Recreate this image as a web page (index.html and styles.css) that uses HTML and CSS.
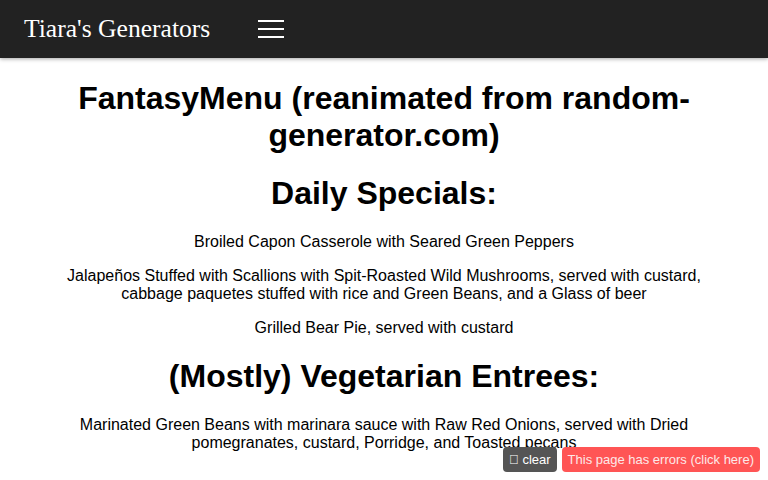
FILE: index.html
```html
<!DOCTYPE html>
<html lang="en">
<head>
  <meta charset="UTF-8">
  <title>FantasyMenu - Tiara's Generators</title>
  <link rel="stylesheet" href="styles.css">
</head>
<body>
  <header class="topbar">
    <a class="brand" href="#">Tiara's Generators</a>
    <button class="burger" type="button" aria-label="menu">
      <span></span><span></span><span></span>
    </button>
  </header>

  <main class="contenido">
    <h1>FantasyMenu (reanimated from random-generator.com)</h1>

    <h2>Daily Specials:</h2>
    <p>Broiled Capon Casserole with Seared Green Peppers</p>
    <p>Jalapeños Stuffed with Scallions with Spit-Roasted Wild Mushrooms, served with custard, cabbage paquetes stuffed with rice and Green Beans, and a Glass of beer</p>
    <p>Grilled Bear Pie, served with custard</p>

    <h2>(Mostly) Vegetarian Entrees:</h2>
    <p>Marinated Green Beans with marinara sauce with Raw Red Onions, served with Dried pomegranates, custard, Porridge, and Toasted pecans</p>
  </main>

  <div class="avisos">
    <button class="boton limpiar" type="button">&#xf00d; clear</button>
    <button class="boton errores" type="button">This page has errors (click here)</button>
  </div>
</body>
</html>
```

FILE: styles.css
```css
body { margin: 0; font-family: "Liberation Sans", Arial, sans-serif; color: #000; background: #fff; }
.topbar { display: flex; align-items: center; height: 58px; padding: 0 24px; background: #222; box-shadow: 0 1px 4px rgba(0,0,0,0.35); }
.brand { font-family: "Liberation Serif", "Times New Roman", serif; font-size: 25.6px; color: #fff; text-decoration: none; }
.burger { display: flex; flex-direction: column; gap: 6px; margin-left: 48px; padding: 0; border: 0; background: none; }
.burger span { display: block; width: 26px; height: 2px; background: #fff; }
.contenido { max-width: 688px; margin: 0 auto; padding-top: 1px; text-align: center; }
h1, h2 { font-size: 32px; font-weight: bold; margin: 21px 0; }
p { font-size: 16px; margin: 16px 0; }
.avisos { position: fixed; right: 8px; bottom: 8px; display: flex; gap: 5px; }
.boton { height: 25px; padding: 0 6px; border: 0; border-radius: 4px; font-family: "Liberation Sans", Arial, sans-serif; font-size: 13px; color: #fff; }
.limpiar { background: #555; }
.errores { background: #f55; color: #fde8e8; }
```
